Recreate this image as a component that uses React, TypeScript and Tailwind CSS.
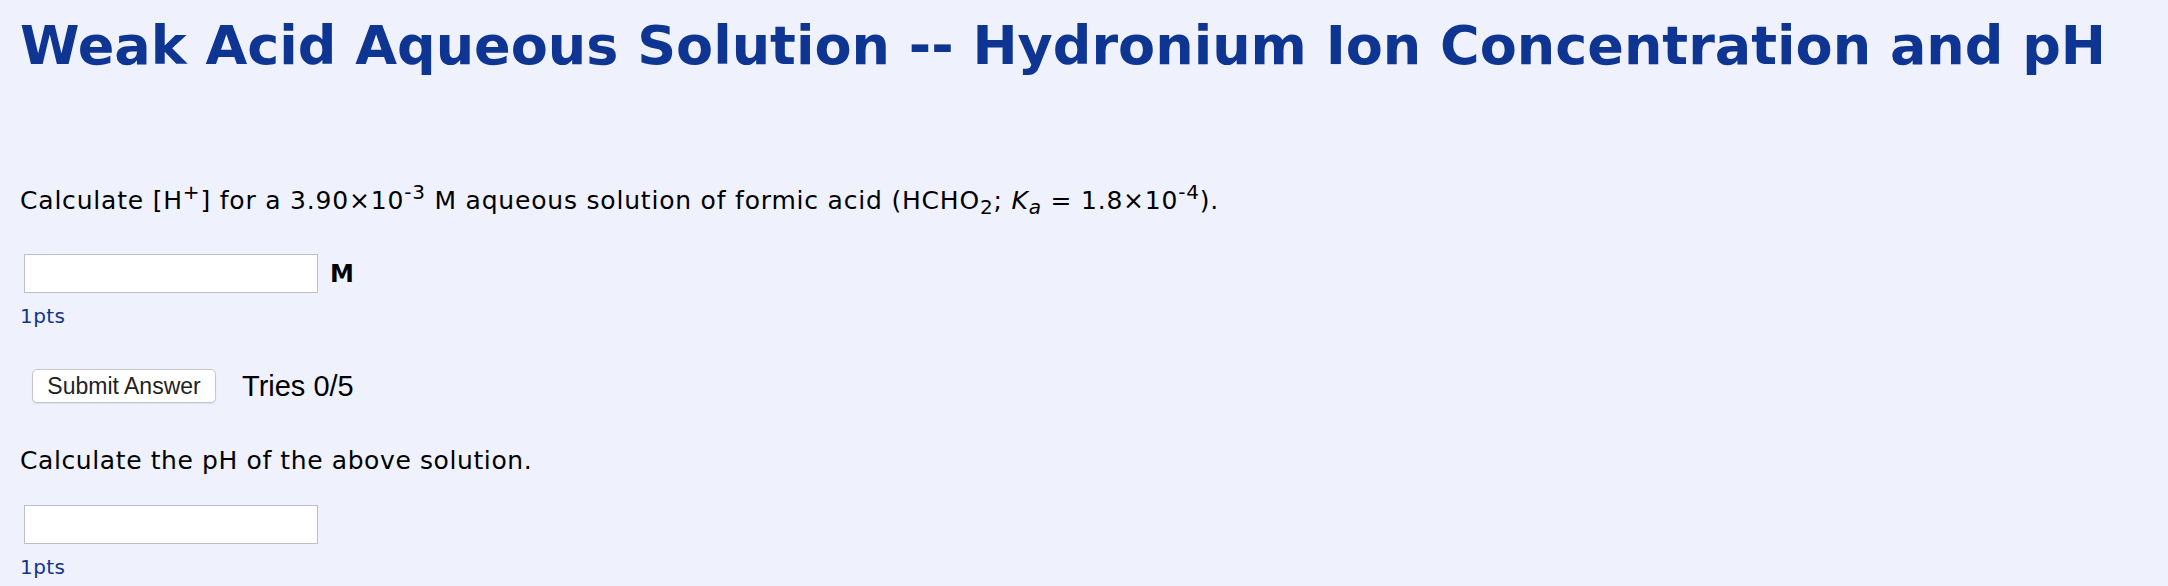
import React from "react";

const body = "font-['DejaVu_Sans','Verdana',sans-serif]";
const ui = "font-['Liberation_Sans','Helvetica',Arial,sans-serif]";

const AnswerBox = ({ unit }: { unit?: string }) => (
  <div className="flex items-center">
    <input
      type="text"
      className="ml-[4px] h-[39px] w-[294px] border border-[#bcbfc9] bg-white px-2 text-[22px] outline-none"
    />
    {unit && (
      <span className="ml-[12px] text-[24px] font-bold text-black">{unit}</span>
    )}
  </div>
);

const Points = ({ value }: { value: number }) => (
  <div className="mt-[11px] text-[20px] leading-[24px] tracking-[0.4px] text-[#12358c]">
    {value}pts
  </div>
);

const App = () => {
  return (
    <div className={`min-h-[586px] w-full bg-[#eff1fc] pl-[20px] ${body}`}>
      <h1 className="pt-[19px] text-[54px] font-bold leading-[54px] text-[#0f3592]">
        Weak Acid Aqueous Solution -- Hydronium Ion Concentration and pH
      </h1>

      {/* first part: [H+] */}
      <p className="mt-[113px] text-[25px] leading-[30px] tracking-[0.8px] text-black [&_sub]:text-[80%] [&_sup]:text-[80%]">
        Calculate [H<sup>+</sup>] for a 3.90×10<sup>-3</sup> M aqueous solution
        of formic acid (HCHO<sub>2</sub>; <i>K</i>
        <sub>
          <i>a</i>
        </sub>{" "}
        = 1.8×10<sup>-4</sup>).
      </p>
      <div className="mt-[38px]">
        <AnswerBox unit="M" />
      </div>
      <Points value={1} />

      <div className="mt-[41px] flex items-center">
        <button
          type="button"
          className={`ml-[12px] h-[34px] w-[184px] rounded-[5px] border border-[#c5c6cb] bg-white text-[23px] leading-none text-[#222] shadow-[0_1px_1px_rgba(0,0,0,0.08)] ${ui}`}
        >
          Submit Answer
        </button>
        <span className={`ml-[26px] text-[29px] leading-none text-black ${ui}`}>
          Tries 0/5
        </span>
      </div>

      {/* second part: pH */}
      <p className="mt-[43px] text-[25px] leading-[30px] tracking-[0.6px] text-black">
        Calculate the pH of the above solution.
      </p>
      <div className="mt-[29px]">
        <AnswerBox />
      </div>
      <Points value={1} />
    </div>
  );
};

export default App;
